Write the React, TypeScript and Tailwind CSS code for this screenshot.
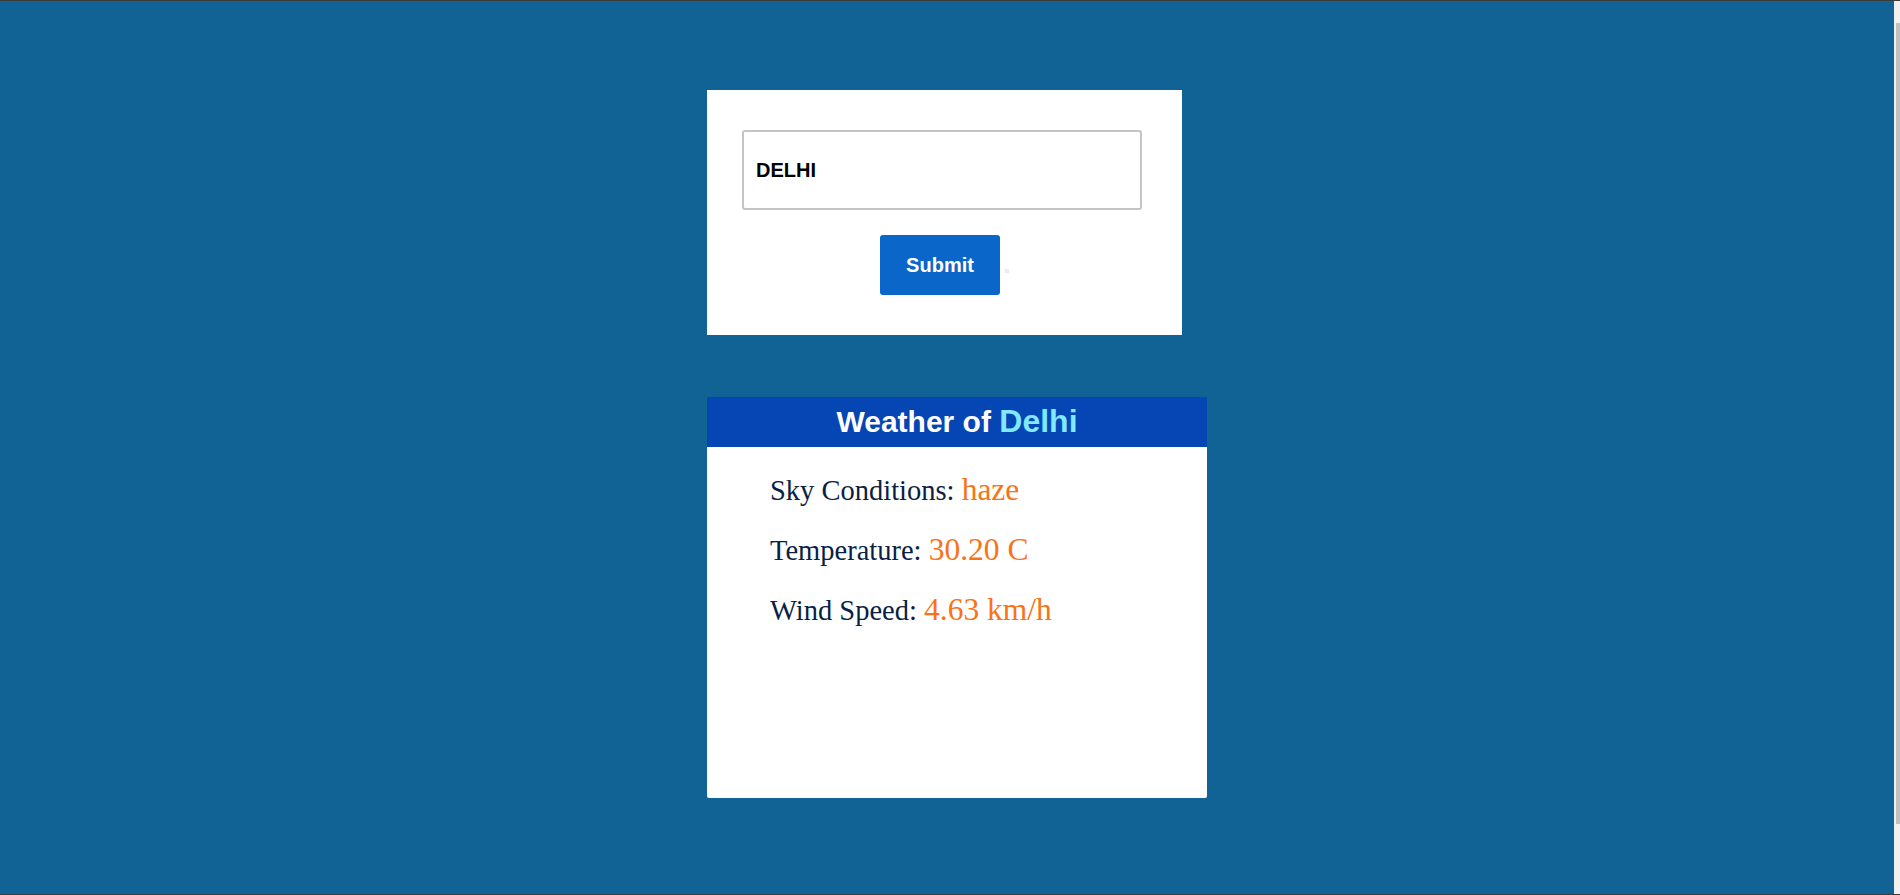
import React from "react";

export default function App() {
  return (
    <div className="h-[895px] w-full flex flex-col bg-[#3b3b3b] overflow-hidden">
      <div className="h-px shrink-0 bg-[#3b3b3b]" />
      <div className="flex flex-1 min-h-0">
        <main className="flex-1 bg-[#116396] pl-[707px] pt-[89px] flex flex-col items-start">
          {/* Search form card */}
          <form
            className="w-[475px] h-[245px] bg-white flex flex-col pt-[40px]"
            onSubmit={(e) => e.preventDefault()}
          >
            <input
              defaultValue="DELHI"
              readOnly
              className="ml-[35px] w-[400px] h-[80px] border-2 border-[#c4c4c4] rounded-[3px] pl-[12px] text-[20px] font-bold text-black outline-none"
              style={{ fontFamily: '"Liberation Sans", Arial, sans-serif' }}
            />
            <div className="mt-[25px] flex justify-center items-center gap-[5px]">
              <button
                type="submit"
                className="w-[120px] h-[60px] bg-[#0a66c8] rounded-[3px] text-white text-[20px] font-bold"
                style={{ fontFamily: '"Liberation Sans", Arial, sans-serif' }}
              >
                Submit
              </button>
              <span className="w-[4px] h-[4px] bg-[#ececec] mt-[12px]" />
            </div>
          </form>

          {/* Weather card */}
          <section className="mt-[62px] w-[500px] h-[401px] bg-white rounded-b-[2px] flex flex-col">
            <h2
              className="h-[50px] bg-[#0545b4] text-center text-white text-[30px] font-bold leading-[48px]"
              style={{ fontFamily: '"Liberation Sans", Arial, sans-serif' }}
            >
              Weather of <span className="text-[32px] text-[#80e9ff]">Delhi</span>
            </h2>
            <div
              className="pl-[63px] pt-[13px] flex flex-col text-[#0b1f45]"
              style={{ fontFamily: '"Liberation Serif", "Times New Roman", serif' }}
            >
              <div className="h-[60px] text-[28.5px] leading-[60px]">
                Sky Conditions: <span className="text-[31.5px] text-[#f97316]">haze</span>
              </div>
              <div className="h-[60px] text-[28.5px] leading-[60px]">
                Temperature: <span className="text-[31.5px] text-[#f97316]">30.20 C</span>
              </div>
              <div className="h-[60px] text-[28.5px] leading-[60px]">
                Wind Speed: <span className="text-[31.5px] text-[#f97316]">4.63 km/h</span>
              </div>
            </div>
          </section>
        </main>
        {/* scrollbar */}
        <div className="w-[6px] shrink-0 bg-[#f1f1f1] flex flex-col pt-[22px] pb-[70px] pl-[2px]">
          <div className="flex-1 bg-[#c1c1c1]" />
        </div>
      </div>
      <div className="h-px shrink-0 bg-[#3b3b3b]" />
    </div>
  );
}
